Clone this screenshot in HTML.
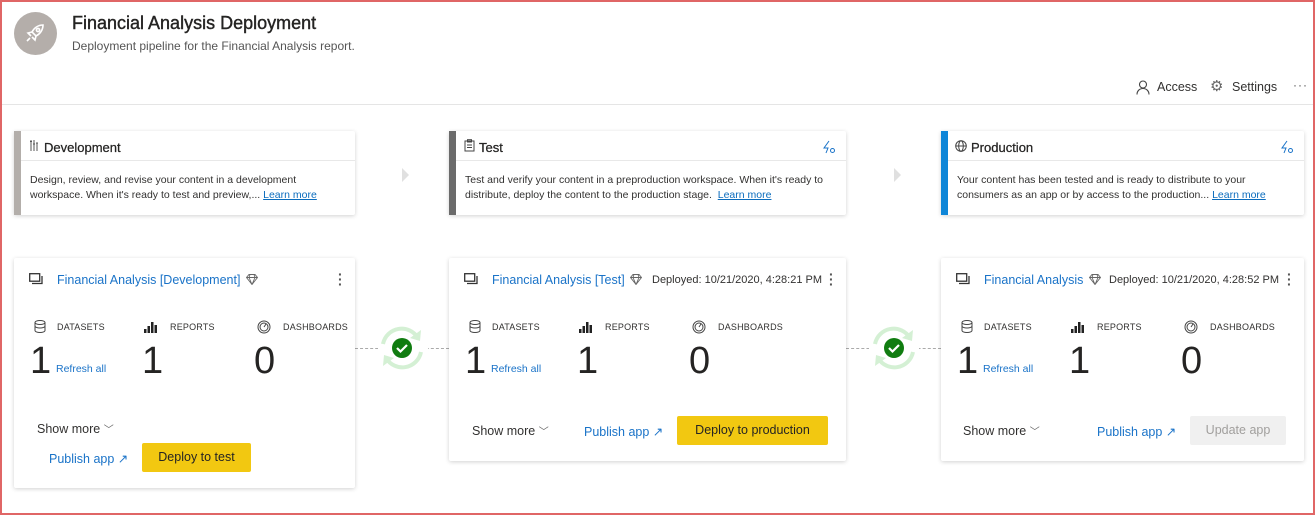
<!DOCTYPE html>
<html><head><meta charset="utf-8"><style>
*{margin:0;padding:0;box-sizing:border-box}
body{width:1315px;height:515px;overflow:hidden;background:#fff;font-family:"Liberation Sans",sans-serif;color:#252423;position:relative}
.frame{position:absolute;left:0;top:0;width:1315px;height:515px;border:2px solid #e06666;pointer-events:none;z-index:10}
.a{position:absolute;white-space:nowrap}
.stage{position:absolute;top:131px;height:84px;background:#fff;box-shadow:0 1px 4px rgba(0,0,0,.18);border-radius:2px}
.stage .bar{position:absolute;left:0;top:0;bottom:0;width:7px}
.stage .t{position:absolute;left:30px;top:9px;font-size:13px;color:#252423;-webkit-text-stroke:.25px #252423}
.stage .ic{position:absolute;left:15px;top:8px}
.stage .sep{position:absolute;left:7px;right:0;top:29px;height:1px;background:#e8e8e8}
.stage .d{position:absolute;left:16px;top:42px;font-size:10.5px;line-height:15px;color:#323130;white-space:nowrap}
.lm{color:#0b6cbd;text-decoration:underline}
.card{position:absolute;top:258px;background:#fff;box-shadow:0 1px 4px rgba(0,0,0,.18);border-radius:2px}
.card .tt{position:absolute;left:43px;top:15px;font-size:12.5px;color:#1a73c8}
.card .dep{position:absolute;top:16px;font-size:11px;color:#323130}
.lbl{position:absolute;top:64px;font-size:9px;color:#323130;letter-spacing:.2px}
.num{position:absolute;top:82px;font-size:38px;font-weight:300;color:#252423}
.rf{position:absolute;top:105px;font-size:10.5px;color:#1a73c8}
.sm{position:absolute;font-size:12.5px;color:#323130}
.pa{position:absolute;font-size:12.5px;color:#1a73c8}
.btn{position:absolute;height:29px;background:#f2c811;font-size:12.5px;color:#252423;text-align:center;line-height:29px;border-radius:2px}
.dots{position:absolute;font-size:14px;color:#555;font-weight:bold;line-height:5px;width:4px}
.si{position:absolute;top:62px}
</style></head><body>
<div class="frame"></div>
<svg width="0" height="0" style="position:absolute">
<defs>
<symbol id="ws" viewBox="0 0 14 12"><rect x="0.7" y="0.7" width="10" height="7.5" fill="#fff" stroke="#333" stroke-width="1.3"/><path d="M3 10.5h10V3" fill="none" stroke="#333" stroke-width="1.3"/></symbol>
<symbol id="db" viewBox="0 0 12 13"><ellipse cx="6" cy="2.5" rx="5" ry="2" fill="none" stroke="#444"/><path d="M1 2.5v8c0 1.1 2.2 2 5 2s5-.9 5-2v-8M1 6c0 1.1 2.2 2 5 2s5-.9 5-2" fill="none" stroke="#444"/></symbol>
<symbol id="rp" viewBox="0 0 14 12"><rect x="0" y="8" width="2.5" height="4" fill="#222"/><rect x="3.5" y="5" width="2.5" height="7" fill="#222"/><rect x="7" y="1" width="2.5" height="11" fill="#222"/><rect x="10.5" y="4" width="2.5" height="8" fill="#222"/></symbol>
<symbol id="ds" viewBox="0 0 14 14"><circle cx="7" cy="7" r="6" fill="none" stroke="#444"/><circle cx="7" cy="7" r="4" fill="none" stroke="#444"/><path d="M7 7l2-3" stroke="#444"/></symbol>
<symbol id="gem" viewBox="0 0 12 11"><path d="M3 .5h6l2.5 3L6 10.5.5 3.5z M.5 3.5h11 M4 .5L3 3.5l3 7 3-7-1-3" fill="none" stroke="#666" stroke-width=".9"/></symbol>
<symbol id="sync" viewBox="0 0 52 52"><path d="M7 22A19 19 0 0 1 42 16" fill="none" stroke="#d4f0d4" stroke-width="4"/><path d="M45 8l-1 11-10-3z" fill="#d4f0d4"/><path d="M45 30A19 19 0 0 1 10 36" fill="none" stroke="#d4f0d4" stroke-width="4"/><path d="M7 44l1-11 10 3z" fill="#d4f0d4"/><circle cx="26" cy="26" r="10" fill="#107c10"/><path d="M21 26l3.5 3.5L31 23" stroke="#fff" stroke-width="2.2" fill="none"/></symbol>
</defs></svg>
<!-- header -->
<div class="a" style="left:14px;top:12px;width:43px;height:43px;border-radius:50%;background:#b4aeaa"></div>
<svg class="a" style="left:24px;top:22px" width="22" height="22" viewBox="0 0 22 22" fill="none" stroke="#fff" stroke-width="1.6"><path d="M19 3c-5 0-9 3-11 7l4 4c4-2 7-6 7-11z"/><circle cx="14" cy="8" r="1.6"/><path d="M8 10l-4 1 3 3M12 14l-1 4-3-3M6 16l-3 3"/></svg>
<div class="a" style="left:72px;top:13px;font-size:18px;color:#252423;-webkit-text-stroke:.4px #252423">Financial Analysis Deployment</div>
<div class="a" style="left:72px;top:39px;font-size:12px;color:#555">Deployment pipeline for the Financial Analysis report.</div>
<svg class="a" style="left:1136px;top:80px" width="14" height="15" viewBox="0 0 14 15" fill="none" stroke="#444" stroke-width="1.1"><circle cx="7" cy="4.5" r="3.5"/><path d="M1 14.5c0-3.5 2.5-6 6-6s6 2.5 6 6"/></svg>
<div class="a" style="left:1157px;top:80px;font-size:12.5px;color:#323130">Access</div>
<div class="a" style="left:1210px;top:77px;font-size:15px;color:#666">⚙</div>
<div class="a" style="left:1232px;top:80px;font-size:12.5px;color:#323130">Settings</div>
<div class="a" style="left:1293px;top:78px;font-size:12px;color:#555;letter-spacing:1px">···</div>
<div class="a" style="left:2px;top:104px;width:1311px;height:1px;background:#e5e5e5"></div>

<!-- stages -->
<div class="stage" style="left:14px;width:341px"><div class="bar" style="background:#b3aeaa"></div><svg class="ic" width="11" height="13" viewBox="0 0 11 13" fill="none" stroke="#555"><path d="M2 1v11M5 1v11M8 4v8M1 2.5h2M4 5h2M7 4h2"/></svg><div class="t">Development</div><div class="sep"></div><div class="d">Design, review, and revise your content in a development<br>workspace. When it's ready to test and preview,... <span class="lm">Learn more</span></div></div>
<div class="a" style="left:402px;top:168px;width:0;height:0;border-top:7px solid transparent;border-bottom:7px solid transparent;border-left:7px solid #e0e0e0"></div>
<div class="stage" style="left:449px;width:397px"><div class="bar" style="background:#6b6b6b"></div><svg class="ic" width="11" height="13" viewBox="0 0 11 13" fill="none" stroke="#444"><rect x="1" y="2" width="9" height="10"/><rect x="3.5" y="0.7" width="4" height="2.3"/><path d="M3 6h5M3 8.5h5"/></svg><div class="t">Test</div><svg class="a" style="right:10px;top:9px" width="14" height="14" viewBox="0 0 14 14" fill="none" stroke="#1a73c8"><path d="M7 1L2 8h4l-2 5"/><circle cx="10.5" cy="10.5" r="2"/></svg><div class="sep"></div><div class="d">Test and verify your content in a preproduction workspace. When it's ready to<br>distribute, deploy the content to the production stage.&nbsp; <span class="lm">Learn more</span></div></div>
<div class="a" style="left:894px;top:168px;width:0;height:0;border-top:7px solid transparent;border-bottom:7px solid transparent;border-left:7px solid #e0e0e0"></div>
<div class="stage" style="left:941px;width:363px"><div class="bar" style="background:#0f86d8"></div><svg class="a" style="left:14px;top:9px" width="12" height="12" viewBox="0 0 12 12" fill="none" stroke="#444"><circle cx="6" cy="6" r="5.3"/><ellipse cx="6" cy="6" rx="2.3" ry="5.3"/><path d="M.7 6h10.6"/></svg><div class="t">Production</div><svg class="a" style="right:10px;top:9px" width="14" height="14" viewBox="0 0 14 14" fill="none" stroke="#1a73c8"><path d="M7 1L2 8h4l-2 5"/><circle cx="10.5" cy="10.5" r="2"/></svg><div class="sep"></div><div class="d">Your content has been tested and is ready to distribute to your<br>consumers as an app or by access to the production... <span class="lm">Learn more</span></div></div>

<!-- sync icons -->
<div class="a" style="left:355px;top:348px;width:94px;border-top:1px dashed #aaa"></div>
<div class="a" style="left:846px;top:348px;width:95px;border-top:1px dashed #aaa"></div>
<div class="a" style="left:378px;top:323px;width:50px;height:50px;background:#fff"></div>
<svg class="a" style="left:376px;top:322px" width="52" height="52"><use href="#sync"/></svg>
<div class="a" style="left:869px;top:323px;width:50px;height:50px;background:#fff"></div>
<svg class="a" style="left:868px;top:322px" width="52" height="52"><use href="#sync"/></svg>

<!-- dev card -->
<div class="card" style="left:14px;width:341px;height:230px">
 <svg class="a" style="left:15px;top:15px" width="14" height="12"><use href="#ws"/></svg>
 <div class="tt">Financial Analysis [Development] <svg width="12" height="11" style="vertical-align:-1px;margin-left:2px"><use href="#gem"/></svg></div>
 <div class="dots" style="left:324px;top:14px">·<br>·<br>·</div>
 <svg class="si" style="left:20px" width="12" height="13"><use href="#db"/></svg><div class="lbl" style="left:43px">DATASETS</div>
 <svg class="si" style="left:130px;top:63px" width="14" height="12"><use href="#rp"/></svg><div class="lbl" style="left:156px">REPORTS</div>
 <svg class="si" style="left:243px" width="14" height="14"><use href="#ds"/></svg><div class="lbl" style="left:269px">DASHBOARDS</div>
 <div class="num" style="left:16px">1</div><div class="rf" style="left:42px">Refresh all</div>
 <div class="num" style="left:128px">1</div><div class="num" style="left:240px">0</div>
 <div class="sm" style="left:23px;top:163px">Show more <span style="font-size:10px;color:#666">﹀</span></div>
 <div class="pa" style="left:35px;top:193px">Publish app ↗</div>
 <div class="btn" style="left:128px;top:185px;width:109px">Deploy to test</div>
</div>
<!-- test card -->
<div class="card" style="left:449px;width:397px;height:203px">
 <svg class="a" style="left:15px;top:15px" width="14" height="12"><use href="#ws"/></svg>
 <div class="tt">Financial Analysis [Test] <svg width="12" height="11" style="vertical-align:-1px;margin-left:2px"><use href="#gem"/></svg></div>
 <div class="dep" style="left:203px">Deployed: 10/21/2020, 4:28:21 PM</div>
 <div class="dots" style="left:380px;top:14px">·<br>·<br>·</div>
 <svg class="si" style="left:20px" width="12" height="13"><use href="#db"/></svg><div class="lbl" style="left:43px">DATASETS</div>
 <svg class="si" style="left:130px;top:63px" width="14" height="12"><use href="#rp"/></svg><div class="lbl" style="left:156px">REPORTS</div>
 <svg class="si" style="left:243px" width="14" height="14"><use href="#ds"/></svg><div class="lbl" style="left:269px">DASHBOARDS</div>
 <div class="num" style="left:16px">1</div><div class="rf" style="left:42px">Refresh all</div>
 <div class="num" style="left:128px">1</div><div class="num" style="left:240px">0</div>
 <div class="sm" style="left:23px;top:165px">Show more <span style="font-size:10px;color:#666">﹀</span></div>
 <div class="pa" style="left:135px;top:166px">Publish app ↗</div>
 <div class="btn" style="left:228px;top:158px;width:151px">Deploy to production</div>
</div>
<!-- prod card -->
<div class="card" style="left:941px;width:363px;height:203px">
 <svg class="a" style="left:15px;top:15px" width="14" height="12"><use href="#ws"/></svg>
 <div class="tt">Financial Analysis <svg width="12" height="11" style="vertical-align:-1px;margin-left:2px"><use href="#gem"/></svg></div>
 <div class="dep" style="left:168px">Deployed: 10/21/2020, 4:28:52 PM</div>
 <div class="dots" style="left:346px;top:14px">·<br>·<br>·</div>
 <svg class="si" style="left:20px" width="12" height="13"><use href="#db"/></svg><div class="lbl" style="left:43px">DATASETS</div>
 <svg class="si" style="left:130px;top:63px" width="14" height="12"><use href="#rp"/></svg><div class="lbl" style="left:156px">REPORTS</div>
 <svg class="si" style="left:243px" width="14" height="14"><use href="#ds"/></svg><div class="lbl" style="left:269px">DASHBOARDS</div>
 <div class="num" style="left:16px">1</div><div class="rf" style="left:42px">Refresh all</div>
 <div class="num" style="left:128px">1</div><div class="num" style="left:240px">0</div>
 <div class="sm" style="left:22px;top:165px">Show more <span style="font-size:10px;color:#666">﹀</span></div>
 <div class="pa" style="left:156px;top:166px">Publish app ↗</div>
 <div class="btn" style="left:249px;top:158px;width:96px;background:#f0f0f0;color:#a19f9d">Update app</div>
</div>
</body></html>
